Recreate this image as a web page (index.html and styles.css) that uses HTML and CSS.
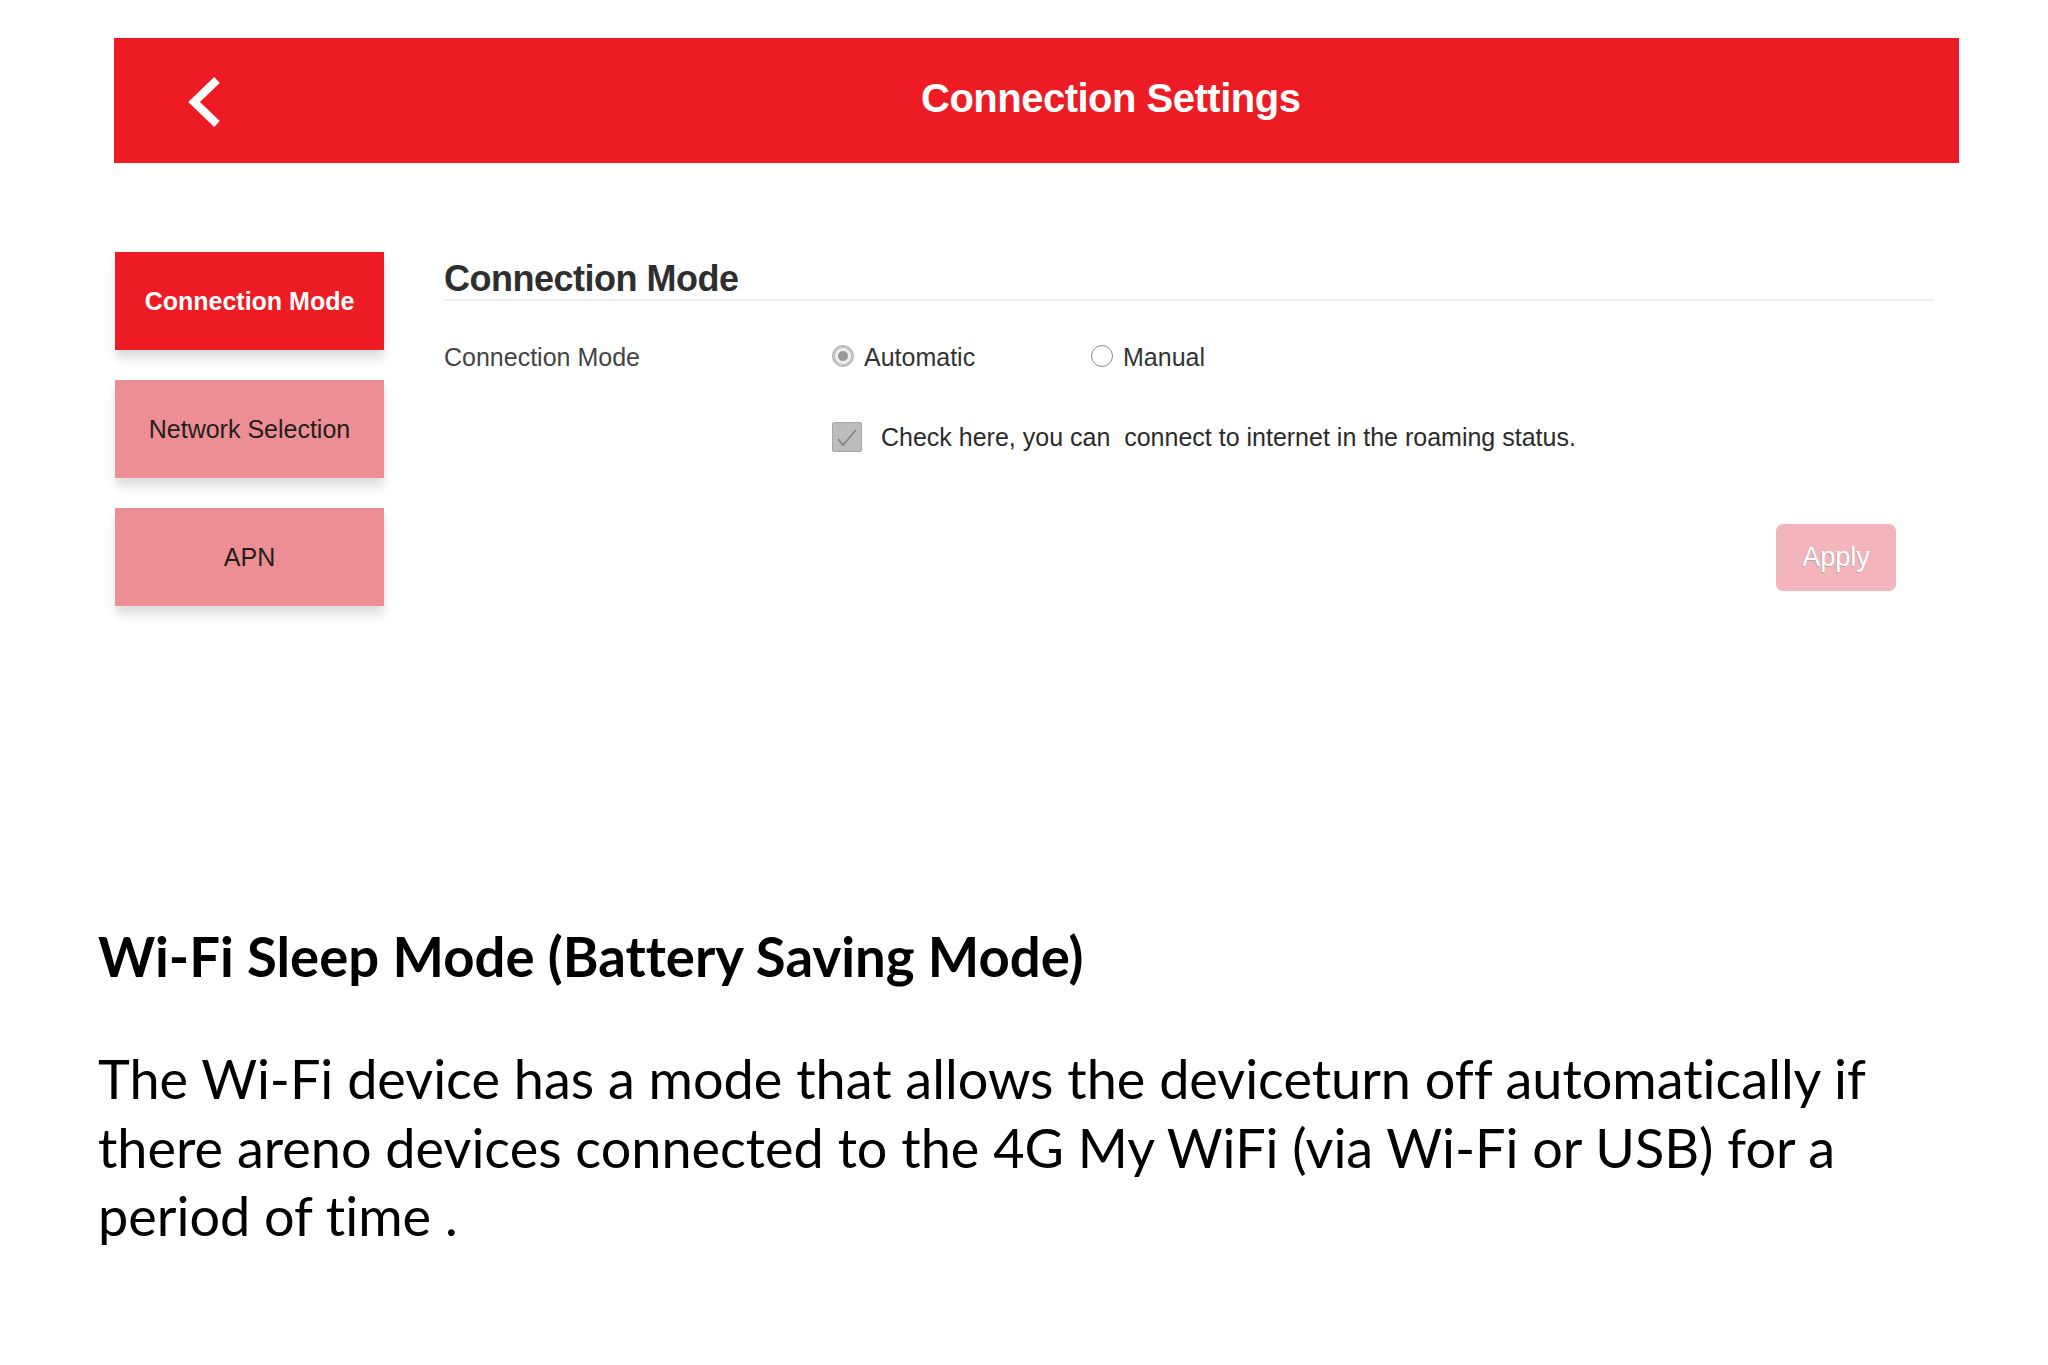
FILE: index.html
```html
<!DOCTYPE html>
<html lang="en">
<head>
<meta charset="utf-8">
<title>Connection Settings</title>
<link rel="stylesheet" href="styles.css">
</head>
<body>
<div class="page">
  <header class="topbar">
    <span class="back" aria-label="Back">
      <svg width="36" height="50" viewBox="0 0 36 50"><polyline points="30,3 7,25 30,47" fill="none" stroke="#fff" stroke-width="8" stroke-linejoin="miter" stroke-linecap="butt"/></svg>
    </span>
    <h1 class="title">Connection Settings</h1>
  </header>

  <section class="panel">
    <nav class="sidebar">
      <div class="tab active">Connection Mode</div>
      <div class="tab">Network Selection</div>
      <div class="tab">APN</div>
    </nav>
    <div class="content">
      <h2 class="section-title">Connection Mode</h2>
      <div class="row">
        <div class="label">Connection Mode</div>
        <div class="option opt-auto"><span class="radio checked"></span><span>Automatic</span></div>
        <div class="option"><span class="radio"></span><span>Manual</span></div>
      </div>
      <div class="row row-check">
        <div class="label"></div>
        <div class="option"><span class="checkbox"><svg width="30" height="30" viewBox="0 0 30 30"><polyline points="6,17 11,23 24,8" fill="none" stroke="#858585" stroke-width="1.8"/></svg></span><span class="check-text">Check here, you can &nbsp;connect to internet in the roaming status.</span></div>
      </div>
      <div class="actions">
        <button class="apply">Apply</button>
      </div>
    </div>
  </section>

  <article class="article">
    <h3 class="article-title">Wi-Fi Sleep Mode (Battery Saving Mode)</h3>
    <p class="article-body">The Wi-Fi device has a mode that allows the deviceturn off automatically if<br>there areno devices connected to the 4G My WiFi (via Wi-Fi or USB) for a<br>period of time .</p>
  </article>
</div>
</body>
</html>
```
FILE: styles.css
```css
html, body {
  margin: 0;
  padding: 0;
  background: #ffffff;
}
.page {
  width: 2048px;
  height: 1365px;
  overflow: hidden;
  font-family: "Liberation Sans", Arial, sans-serif;
}
.topbar {
  margin: 38px 0 0 114px;
  width: 1845px;
  height: 125px;
  background: #ed1c24;
  display: flex;
  align-items: center;
}
.back {
  display: flex;
  margin-left: 73px;
  margin-top: 2px;
}
.title {
  margin: -4px 0 0 698px;
  font-size: 40px;
  font-weight: bold;
  color: #ffffff;
  letter-spacing: -0.5px;
}
.panel {
  display: flex;
  margin-top: 89px;
}
.sidebar {
  margin-left: 115px;
  width: 269px;
  display: flex;
  flex-direction: column;
  gap: 30px;
}
.tab {
  height: 98px;
  display: flex;
  align-items: center;
  justify-content: center;
  background: #ed8e94;
  color: #1f1f1f;
  font-size: 25px;
  box-shadow: 0 9px 9px rgba(0, 0, 0, 0.13);
}
.tab.active {
  background: #ed1c24;
  color: #ffffff;
  font-weight: bold;
}
.content {
  margin-left: 60px;
  width: 1490px;
  padding-top: 7px;
}
.section-title {
  margin: 0;
  font-size: 36px;
  line-height: 40px;
  font-weight: bold;
  color: #2e2e2e;
  letter-spacing: -0.5px;
  border-bottom: 2px solid #efeff1;
}
.row {
  display: flex;
  align-items: center;
  height: 50px;
  margin-top: 31px;
  font-size: 25px;
  color: #333;
}
.row-check {
  margin-top: 30px;
}
.label {
  width: 388px;
  color: #444;
}
.option {
  display: flex;
  align-items: center;
}
.opt-auto {
  width: 259px;
}
.radio {
  width: 22px;
  height: 22px;
  border-radius: 50%;
  border: 1px solid #8a8a8a;
  background: #fff;
  margin-right: 10px;
  box-sizing: border-box;
  margin-top: -2px;
}
.radio.checked {
  border-color: #b0b0b0;
  background: radial-gradient(circle, #9a9a9a 0 4.5px, #ececec 5.5px 7.5px, #c4c4c4 8.5px);
}
.checkbox {
  width: 30px;
  height: 30px;
  box-sizing: border-box;
  border: 1px solid #a6a6a6;
  border-radius: 2px;
  background: #bcbcbc;
  margin-right: 19px;
  display: flex;
}
.checkbox svg {
  margin: -1px;
}
.check-text {
  color: #2b2b2b;
}
.actions {
  display: flex;
  justify-content: flex-end;
  margin-top: 62px;
  padding-right: 38px;
}
.apply {
  width: 120px;
  height: 67px;
  border: none;
  border-radius: 7px;
  background: #f4b4bb;
  color: #ffffff;
  font-family: "Liberation Sans", Arial, sans-serif;
  font-size: 27px;
  text-shadow: -1px 1px 0 #a8a8a8;
  padding: 0;
}
.article {
  margin: 320px 0 0 98px;
  font-variant-ligatures: none;
  font-feature-settings: "liga" 0, "dlig" 0;
}
.article-title {
  margin: 0;
  font-family: Lato, "Open Sans", sans-serif;
  font-weight: bold;
  font-size: 54.5px;
  line-height: 60px;
  color: #000;
}
.article-body {
  margin: 59px 0 0 0;
  font-family: Lato, "Open Sans", sans-serif;
  font-size: 54px;
  line-height: 68.5px;
  color: #000;
  white-space: nowrap;
}
```
